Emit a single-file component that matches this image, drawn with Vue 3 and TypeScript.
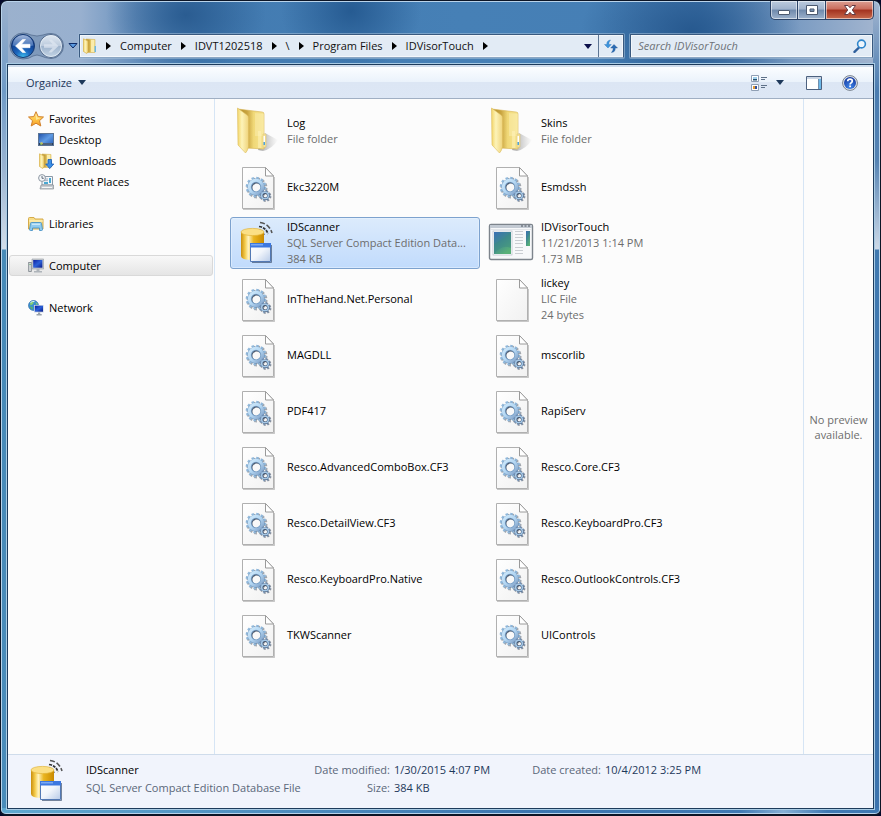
<script setup lang="ts">
import { ref } from 'vue'

interface FileItem {
  name: string
  icon: 'folder' | 'gear' | 'database' | 'app' | 'blank'
  meta: string[]
}
interface Place {
  name: string
  icon: string
  child?: boolean
}

const crumbs: string[] = ['Computer', 'IDVT1202518', '\\', 'Program Files', 'IDVisorTouch']

const groups: Place[][] = [
  [
    { name: 'Favorites', icon: 'star' },
    { name: 'Desktop', icon: 'desktop', child: true },
    { name: 'Downloads', icon: 'downloads', child: true },
    { name: 'Recent Places', icon: 'recent', child: true },
  ],
  [{ name: 'Libraries', icon: 'libraries' }],
  [{ name: 'Computer', icon: 'computer' }],
  [{ name: 'Network', icon: 'network' }],
]

const dll = (name: string): FileItem => ({ name, icon: 'gear', meta: [] })

const files: FileItem[] = [
  { name: 'Log', icon: 'folder', meta: ['File folder'] },
  { name: 'Skins', icon: 'folder', meta: ['File folder'] },
  dll('Ekc3220M'),
  dll('Esmdssh'),
  { name: 'IDScanner', icon: 'database', meta: ['SQL Server Compact Edition Data...', '384 KB'] },
  { name: 'IDVisorTouch', icon: 'app', meta: ['11/21/2013 1:14 PM', '1.73 MB'] },
  dll('InTheHand.Net.Personal'),
  { name: 'lickey', icon: 'blank', meta: ['LIC File', '24 bytes'] },
  dll('MAGDLL'),
  dll('mscorlib'),
  dll('PDF417'),
  dll('RapiServ'),
  dll('Resco.AdvancedComboBox.CF3'),
  dll('Resco.Core.CF3'),
  dll('Resco.DetailView.CF3'),
  dll('Resco.KeyboardPro.CF3'),
  dll('Resco.KeyboardPro.Native'),
  dll('Resco.OutlookControls.CF3'),
  dll('TKWScanner'),
  dll('UIControls'),
]

const selected = ref('IDScanner')
const place = ref('Computer')
const query = ref('')
</script>

<template>
  <svg class="sprite" width="0" height="0" aria-hidden="true">
    <defs>
      <linearGradient id="gFolderFront" x1="0" y1="0" x2="1" y2="0">
        <stop offset="0" stop-color="#f3d568" /><stop offset=".4" stop-color="#fdf3b8" /><stop offset="1" stop-color="#efd47c" />
      </linearGradient>
      <linearGradient id="gFolderBack" x1="0" y1="0" x2="1" y2="0">
        <stop offset="0" stop-color="#b08d2c" /><stop offset=".35" stop-color="#c9a440" /><stop offset=".6" stop-color="#f0d877" /><stop offset="1" stop-color="#f7e694" />
      </linearGradient>
      <linearGradient id="gShadow" x1="0" y1="0" x2="1" y2="0">
        <stop offset="0" stop-color="#666" stop-opacity=".6" /><stop offset="1" stop-color="#888" stop-opacity="0" />
      </linearGradient>
      <linearGradient id="gPage" x1="0" y1="0" x2="1" y2="1">
        <stop offset="0" stop-color="#fff" /><stop offset="1" stop-color="#f1f1f1" />
      </linearGradient>
      <linearGradient id="gGear" x1="0" y1="0" x2="1" y2="1">
        <stop offset="0" stop-color="#cfe9fb" /><stop offset=".5" stop-color="#b3d6f2" /><stop offset="1" stop-color="#7f9fc6" />
      </linearGradient>
      <linearGradient id="gCyl" x1="0" y1="0" x2="1" y2="0">
        <stop offset="0" stop-color="#c98e0c" /><stop offset=".18" stop-color="#f5cd4e" /><stop offset=".32" stop-color="#fff3bf" />
        <stop offset=".55" stop-color="#eab520" /><stop offset="1" stop-color="#c98a00" />
      </linearGradient>
      <linearGradient id="gWin" x1="0" y1="0" x2="1" y2="1">
        <stop offset="0" stop-color="#fff" /><stop offset=".5" stop-color="#f1f5fb" /><stop offset="1" stop-color="#b8cbe8" />
      </linearGradient>
      <linearGradient id="gShot" x1="0" y1="0" x2=".6" y2="1">
        <stop offset="0" stop-color="#3b6fb5" /><stop offset=".45" stop-color="#3f8694" /><stop offset="1" stop-color="#58b078" />
      </linearGradient>
      <linearGradient id="gScreen" x1="0" y1="0" x2="1" y2="1">
        <stop offset="0" stop-color="#0b1f9e" /><stop offset=".5" stop-color="#2a5fd8" /><stop offset="1" stop-color="#0a1c88" />
      </linearGradient>
      <linearGradient id="gStar" x1="0" y1="0" x2="0" y2="1">
        <stop offset="0" stop-color="#ffe9a0" /><stop offset=".5" stop-color="#ffc94a" /><stop offset="1" stop-color="#f59a28" />
      </linearGradient>
      <linearGradient id="gDesk" x1="0" y1="0" x2="1" y2="1">
        <stop offset="0" stop-color="#1f50a8" /><stop offset=".5" stop-color="#5f9be4" /><stop offset="1" stop-color="#2459b4" />
      </linearGradient>
      <radialGradient id="gBack" cx=".5" cy="1" r=".75">
        <stop offset="0" stop-color="#3fc0ee" /><stop offset=".45" stop-color="#1c66bd" /><stop offset="1" stop-color="#0e3b8c" />
      </radialGradient>
      <linearGradient id="gGloss" x1="0" y1="0" x2="0" y2="1">
        <stop offset="0" stop-color="#dfeafa" stop-opacity=".95" /><stop offset="1" stop-color="#6f9bd4" stop-opacity=".7" />
      </linearGradient>
      <linearGradient id="gFwd" x1="0" y1="0" x2="0" y2="1">
        <stop offset="0" stop-color="#e3eaf3" /><stop offset=".48" stop-color="#bccbdd" /><stop offset=".52" stop-color="#9fb4cd" /><stop offset="1" stop-color="#c4d5e6" />
      </linearGradient>
      <radialGradient id="gHelp" cx=".5" cy=".8" r=".8">
        <stop offset="0" stop-color="#3f86ea" /><stop offset="1" stop-color="#15379c" />
      </radialGradient>
    </defs>

    <symbol id="i-folder" viewBox="0 0 48 48">
      <path d="M24 43 L31 26 L44 33 Q38 42 29 44 Z" fill="url(#gShadow)" />
      <path d="M4 2 L28 5 Q30 5 30 7 L30 42 L12 41 Z" fill="url(#gFolderBack)" stroke="#d6b450" stroke-width=".6" />
      <path d="M21 6 L30 7 L30 29 L21 29 Z" fill="#fbeeb0" opacity=".5" />
      <path d="M24 24 H27 V41 H24 Z" fill="#fff3bd" opacity=".5" />
      <path d="M29 27 h3 v13 l-3 1 Z" fill="#f4e19a" stroke="#dcc06a" stroke-width=".5" />
      <path d="M29.500 29 h1.500 v6 h-1.500 Z" fill="#fff" />
      <path d="M29.500 35 h1.500 v3 h-1.500 Z" fill="#4aa3df" />
      <path d="M3.500 1 L13 8 Q14.500 9 14.500 11 L14.500 40 Q13.500 44 11.500 46 L4 38 Z" fill="url(#gFolderFront)" stroke="#dcbc5c" stroke-width=".6" />
    </symbol>

    <symbol id="i-page" viewBox="0 0 48 48">
      <path d="M8.500 4.500 H31.500 L39.500 13 V45.500 H8.500 Z" fill="url(#gPage)" stroke="#b0b0b0" />
      <path d="M9 46.500 H40.500 V14" fill="none" stroke="#888" stroke-opacity=".45" />
      <path d="M31.500 4.500 V13 H39.500 Z" fill="#fff" stroke="#9a9a9a" />
    </symbol>

    <symbol id="i-blank" viewBox="0 0 48 48"><use href="#i-page" /></symbol>

    <symbol id="i-gear" viewBox="0 0 48 48">
      <use href="#i-page" />
      <g fill="none">
        <circle cx="23" cy="25" r="8.500" stroke="#4b5563" stroke-opacity=".5" stroke-width="4" stroke-dasharray="2.450 2" />
        <circle cx="22" cy="24" r="9" stroke="#8fb7da" stroke-width="2.600" stroke-dasharray="2.400 2.310" />
        <circle cx="22.600" cy="24.800" r="6" stroke="#4b5b70" stroke-width="3.600" />
        <circle cx="22" cy="24" r="6.500" stroke="#7aa2ca" stroke-width="4.200" />
        <circle cx="22" cy="24" r="6.700" stroke="url(#gGear)" stroke-width="3" />
        <circle cx="31.800" cy="33.300" r="4.600" stroke="#5b6677" stroke-opacity=".7" stroke-width="2" stroke-dasharray="1.800 1.800" />
        <circle cx="31" cy="32.500" r="4.500" stroke="#6f8fb5" stroke-width="2" stroke-dasharray="1.700 1.830" />
        <circle cx="31.300" cy="32.800" r="3" stroke="#42526a" stroke-width="2.400" />
        <circle cx="31" cy="32.500" r="3.300" stroke="#a4c8e8" stroke-width="1.600" />
      </g>
    </symbol>

    <symbol id="i-database" viewBox="0 0 48 48">
      <g fill="none" stroke="#333">
        <path d="M25 11 q4 1 5 5" stroke-width="1.400" />
        <path d="M25 7.500 q7 1 9 7.500" stroke-width="1.700" stroke-dasharray="3 1" />
        <path d="M26 3.500 q9 1 12 10.500" stroke-width="1.600" stroke-dasharray="5 2" stroke="#555" />
      </g>
      <path d="M7 13 V37 Q7 41 18.500 41 Q30 41 30 37 V13 Z" fill="url(#gCyl)" />
      <ellipse cx="18.500" cy="13" rx="11.500" ry="3.600" fill="#fbdf85" stroke="#e3b43a" stroke-width=".7" />
      <path d="M16.500 24.500 H36.500 V42.500 H16.500 Z" fill="url(#gWin)" stroke="#5379b4" />
      <path d="M16 24 H37 V28.500 H16 Z" fill="#3d78e0" />
      <path d="M17 25 H29 V26.500 H17 Z" fill="#7ba9f2" />
      <path d="M37.500 26 V43.500 H18" fill="none" stroke="#3e5272" stroke-opacity=".7" />
    </symbol>

    <symbol id="i-app" viewBox="0 0 48 48">
      <rect x="1.500" y="5.500" width="43" height="35" rx="1.500" fill="#f7f8fa" stroke="#7d848c" stroke-width="1.400" />
      <path d="M2 6 H44 V9 H2 Z" fill="#c3cad3" />
      <path d="M33 7 h2 m1.500 0 h2 m1.500 0 h2" stroke="#4a525c" stroke-width="1.200" />
      <path d="M3 10 H43 V11 H3 Z" fill="#e3e6ea" />
      <rect x="5" y="12" width="19" height="24" fill="#fff" stroke="#b6bec8" stroke-width=".7" />
      <rect x="6" y="13" width="17" height="22" fill="url(#gShot)" />
      <path d="M6 25 Q15 21 23 13 V29 Q14 25 6 35 Z" fill="#3c8a83" opacity=".5" />
      <path d="M27 12.500 h8 m-8 3 h8 m-8 3 h8 m-8 3 h8 m-8 3 h8 m-8 4 h8 m-8 3 h8 m-8 3 h8" stroke="#c9cdd2" />
      <rect x="38" y="12" width="4" height="15" fill="url(#gShot)" />
    </symbol>

    <symbol id="i-star" viewBox="0 0 16 16">
      <path d="M8 .7 L10.200 5.600 L15.500 6 L11.500 9.700 L12.800 15 L8 12.200 L3.200 15 L4.500 9.700 L.5 6 L5.800 5.600 Z" fill="url(#gStar)" stroke="#d1812c" stroke-width="1" stroke-linejoin="round" />
      <path d="M8 3 L9.200 6.500 L12.500 7 L8 9 Z" fill="#fff2b5" opacity=".7" />
    </symbol>

    <symbol id="i-desktop" viewBox="0 0 16 16">
      <rect x=".5" y="1.500" width="15" height="12" fill="url(#gDesk)" stroke="#5b7494" />
      <path d="M1 11 H15 V13 H1 Z" fill="#2b3f5c" />
      <path d="M5 12 h9" stroke="#8497b3" stroke-width=".8" />
      <circle cx="3.500" cy="11.500" r="1.300" fill="#e8c95a" /><circle cx="3" cy="12" r=".8" fill="#57c36e" />
    </symbol>

    <symbol id="i-minifolder" viewBox="0 0 16 16">
      <path d="M4 1 L13 1.500 V14.500 H5 Z" fill="url(#gFolderBack)" stroke="#d9b75a" stroke-width=".6" />
      <path d="M9 2 h3 v12 h-3 Z" fill="#fdf2bd" opacity=".7" />
      <path d="M1.500 .8 L6 3 V13.500 L4.800 15.500 L1.500 13.500 Z" fill="url(#gFolderFront)" stroke="#d8b24c" stroke-width=".7" />
      <path d="M12.500 8 h1.500 v6 h-1.500 Z" fill="#6cb7e4" />
    </symbol>

    <symbol id="i-downloads" viewBox="0 0 16 16">
      <use href="#i-minifolder" />
      <path d="M10 6.500 h3.500 v4.500 h2.300 L11.700 15.600 L7.700 11 H10 Z" fill="#3a8ee6" stroke="#1d5cb0" stroke-width=".8" />
    </symbol>

    <symbol id="i-recent" viewBox="0 0 16 16">
      <path d="M4 2.500 H14.500 V11 H4 Z" fill="#f5f8fb" stroke="#8b98a6" />
      <path d="M6 8 h4 v2 h-4 Z m5 -4 h2 v5 h-2 Z" fill="#4aa8d2" />
      <path d="M6 5 h4 M6 6.700 h4" stroke="#8c9bb0" stroke-width=".8" />
      <path d="M3 11 H15.500 V15 H2 Z" fill="#c7ccd2" stroke="#8b9097" stroke-width=".7" />
      <path d="M4 13.500 h10" stroke="#f7f7f7" />
      <circle cx="4" cy="4" r="3.400" fill="#f6f8fa" stroke="#8d97a3" stroke-width="1" />
      <path d="M4 2 V4.300 H5.800" fill="none" stroke="#3c4c60" stroke-width=".8" />
    </symbol>

    <symbol id="i-libraries" viewBox="0 0 16 16">
      <path d="M.5 2.500 Q.5 1.500 1.500 1.500 H6 L7 3 H15 V13 H.5 Z" fill="#f8dd87" stroke="#d5ab4a" />
      <path d="M1 5 H15" stroke="#fff4c4" />
      <path d="M2.500 7.500 Q2.500 6.500 3.500 6.500 H12.500 Q13.500 6.500 13.500 7.500 L14.500 13.500 Q14.500 14.500 13.500 14.500 H11.500 V12 H4.500 V14.500 H2.500 Q1.500 14.500 1.500 13.500 Z" fill="#90cbee" stroke="#4a93c6" stroke-width=".9" />
      <path d="M4 8.200 H12" stroke="#e3f4fd" />
    </symbol>

    <symbol id="i-computer" viewBox="0 0 16 16">
      <rect x=".7" y="4.500" width="2.600" height="9" fill="#d5d9dc" stroke="#7b8288" stroke-width=".8" />
      <path d="M1.500 6.500 h1.200" stroke="#53b35a" stroke-width="1" />
      <path d="M4 1 H15.600 V11 H4 Z" fill="#c9ced4" stroke="#92999f" stroke-width=".6" />
      <path d="M5.200 2 H14.400 V9.700 H5.200 Z" fill="url(#gScreen)" />
      <path d="M8.500 11 h3 v2 h2.500 v1.500 h-8 V13 h2.500 Z" fill="#aeb4ba" />
    </symbol>

    <symbol id="i-network" viewBox="0 0 16 16">
      <circle cx="5.500" cy="5.500" r="5" fill="#3a8fd0" stroke="#2464a4" stroke-width=".6" />
      <path d="M2 3 Q4 .7 6 1.200 L5 4 L2.500 5.500 Z M7.500 2 L10 4 L8.500 5 Z" fill="#86d070" />
      <path d="M1.500 6.500 L4.500 7 L4.500 10 Z" fill="#5eb85c" />
      <path d="M2.500 2.500 q2 -1.500 4 -1" stroke="#d5efff" fill="none" />
      <path d="M6 5 H15.700 V12.500 H6 Z" fill="#d2dbe6" />
      <path d="M6.800 5.700 H15 V11.700 H6.800 Z" fill="url(#gScreen)" />
      <path d="M10 12.500 h2.200 v1.500 h1.500 v1.400 h-5.200 V14 h1.500 Z" fill="#9aa3ac" />
    </symbol>
  </svg>

  <div class="window">
    <header class="titlebar">
      <div class="caption">
        <button class="cap" aria-label="Minimize">
          <svg width="14" height="12"><rect x="1.500" y="6.500" width="11" height="4" rx=".5" fill="#fff" stroke="#4d5a70" /></svg>
        </button>
        <button class="cap" aria-label="Maximize">
          <svg width="14" height="12"><path d="M1.500 1.500 H12.500 V10.500 H1.500 Z M5 5 V7.500 H9 V5 Z" fill="#fff" fill-rule="evenodd" stroke="#4d5a70" /></svg>
        </button>
        <button class="cap close" aria-label="Close">
          <svg width="14" height="12"><path d="M1.500 1.500 H5 L7 3.700 L9 1.500 H12.500 L9.300 6 L12.500 10.500 H9 L7 8.300 L5 10.500 H1.500 L4.700 6 Z" fill="#fff" stroke="#633a43" /></svg>
        </button>
      </div>

      <div class="navrow">
        <div class="history">
          <svg class="pod" viewBox="0 0 56 28" aria-hidden="true">
            <path d="M14 1 Q18 1 22 3 Q28 5 34 3 Q38 1.500 42 1.500 A12.500 12.500 0 0 1 42 26.500 Q36 26 32 24 Q28 22 24 24 Q20 27 14 27 A13 13 0 0 1 14 1 Z" fill="#5f7ea4" fill-opacity=".45" stroke="#4d6588" stroke-opacity=".7" />
          </svg>
          <button class="round" aria-label="Back">
            <svg viewBox="0 0 26 26" width="26" height="26">
              <circle cx="13" cy="13" r="11.500" fill="url(#gBack)" stroke="#173a72" />
              <path d="M2.500 12.500 A10.500 10.500 0 0 1 23.500 12.500 Q13 15 2.500 12.500 Z" fill="url(#gGloss)" opacity=".75" />
              <path d="M5.500 13 L12.500 6.500 H15.500 L11.500 11.300 H20 V14.700 H11.500 L15.500 19.500 H12.500 Z" fill="#fff" stroke="#fff" stroke-width=".6" />
            </svg>
          </button>
          <button class="round" aria-label="Forward">
            <svg viewBox="0 0 26 26" width="26" height="26">
              <circle cx="13" cy="13" r="11.500" fill="url(#gFwd)" stroke="#52698b" />
              <circle cx="13" cy="13" r="10.500" fill="none" stroke="#e4edf6" stroke-opacity=".8" />
              <path d="M20.500 13 L13.500 6.500 H10.500 L14.500 11.300 H6 V14.700 H14.500 L10.500 19.500 H13.500 Z" fill="#dde6f0" fill-opacity=".75" />
            </svg>
          </button>
          <button class="recent" aria-label="Recent pages">
            <svg width="10" height="8"><path d="M1 1.500 H9 L5 6 Z" fill="#5b9be0" stroke="#0d2a66" /></svg>
          </button>
        </div>

        <nav class="address" aria-label="Address">
          <svg class="i16"><use href="#i-minifolder" /></svg>
          <template v-for="c in crumbs" :key="c">
            <svg class="sep" width="5" height="8"><path d="M0 0 L5 4 L0 8 Z" fill="#000" /></svg>
            <a href="#" @click.prevent>{{ c }}</a>
          </template>
          <svg class="sep" width="5" height="8"><path d="M0 0 L5 4 L0 8 Z" fill="#000" /></svg>
          <button class="drop" aria-label="Previous locations">
            <svg width="8" height="5"><path d="M0 0 H8 L4 5 Z" fill="#0a0f4a" /></svg>
          </button>
          <button class="refresh" aria-label="Refresh">
            <svg width="14" height="14" viewBox="0 0 14 14">
              <path d="M6.500 1 Q2.500 1.500 2.800 5.500 H.5 L4 9 L7.300 5.500 H4.800 Q4.500 3 6.500 1 Z" fill="#3c94dc" stroke="#2a72b8" stroke-width=".4" />
              <path d="M7.500 13.500 Q11.500 13 11.200 9 H13.500 L10 5.500 L6.700 9 H9.200 Q9.500 11.500 7.500 13.500 Z" fill="#2a6cb4" stroke="#1d5494" stroke-width=".4" />
            </svg>
          </button>
        </nav>

        <form class="search" @submit.prevent>
          <input v-model="query" type="text" aria-label="Search IDVisorTouch" placeholder="Search IDVisorTouch" />
          <button aria-label="Search">
            <svg width="14" height="14" viewBox="0 0 14 14">
              <path d="M6 8.500 L1.500 12.800" stroke="#2f5f9c" stroke-width="2.400" stroke-linecap="round" />
              <circle cx="8.500" cy="5" r="3.900" fill="#eef6fd" stroke="#2f86cc" stroke-width="1.600" />
            </svg>
          </button>
        </form>
      </div>
    </header>

    <main class="client">
      <div class="toolbar">
        <button class="organize">
          Organize
          <svg width="8" height="5"><path d="M0 0 H8 L4 5 Z" fill="#1e395b" /></svg>
        </button>
        <div class="tools">
          <button aria-label="Change your view">
            <svg width="16" height="16">
              <path d="M.5 .5 h7 v6 h-7 Z M.5 9.500 h7 v6 h-7 Z" fill="#fff" stroke="#8f9fb4" />
              <path d="M2 4 h4 v1.500 h-4 Z" fill="#27506e" /><path d="M2 2 h4 v2 h-4 Z" fill="#9fd0ec" />
              <path d="M2 11 h2 v3 h-2 Z" fill="#e39a34" /><path d="M4 11 h2 v3 h-2 Z" fill="#34519c" />
              <path d="M10 2.500 h6 M10 4.500 h4 M10 10.500 h6 M10 12.500 h4" stroke="#5e7188" />
            </svg>
          </button>
          <button class="more" aria-label="More options">
            <svg width="8" height="5"><path d="M0 0 H8 L4 5 Z" fill="#1e395b" /></svg>
          </button>
          <button class="panebtn" aria-label="Hide the preview pane">
            <svg width="16" height="14">
              <path d="M.5 .5 H15.500 V13.500 H.5 Z" fill="#fff" stroke="#4c617f" />
              <path d="M1 1 H15 V3 H1 Z" fill="#cad5e4" /><path d="M13 3 H15 V13 H13 Z" fill="#6cb8e8" /><path d="M12.500 3 V13" stroke="#7290ae" />
            </svg>
          </button>
          <button aria-label="Get help">
            <svg width="16" height="16" viewBox="0 0 16 16">
              <circle cx="8" cy="8" r="7.400" fill="#e3e7ec" stroke="#76808e" stroke-width="1" />
              <circle cx="8" cy="8" r="6" fill="url(#gHelp)" />
              <path d="M5.700 6.300 Q5.700 4.200 8 4.200 Q10.300 4.200 10.300 6.100 Q10.300 7.200 9 7.900 Q8.100 8.400 8.100 9.500" fill="none" stroke="#fff" stroke-width="1.700" />
              <rect x="7.200" y="10.500" width="1.800" height="1.700" fill="#fff" />
            </svg>
          </button>
        </div>
      </div>

      <div class="body">
        <nav class="places" aria-label="Places">
          <ul v-for="(g, i) in groups" :key="i">
            <li v-for="p in g" :key="p.name">
              <button :class="{ child: p.child, current: p.name === place }" @click="place = p.name">
                <svg class="i16"><use :href="'#i-' + p.icon" /></svg>
                {{ p.name }}
              </button>
            </li>
          </ul>
        </nav>

        <section class="files" aria-label="Files">
          <button
            v-for="f in files"
            :key="f.name"
            class="file"
            :class="{ selected: f.name === selected }"
            @click="selected = f.name"
          >
            <svg class="i48"><use :href="'#i-' + f.icon" /></svg>
            <span class="lines">
              <span class="name">{{ f.name }}</span>
              <span v-for="m in f.meta" :key="m" class="meta">{{ m }}</span>
            </span>
          </button>
        </section>

        <aside class="preview">No preview available.</aside>
      </div>

      <footer class="details">
        <svg class="i48"><use href="#i-database" /></svg>
        <div class="what">
          <p class="title">IDScanner</p>
          <p class="kind">SQL Server Compact Edition Database File</p>
        </div>
        <dl class="modified">
          <dt>Date modified:</dt><dd>1/30/2015 4:07 PM</dd>
          <dt>Size:</dt><dd>384 KB</dd>
        </dl>
        <dl class="created">
          <dt>Date created:</dt><dd>10/4/2012 3:25 PM</dd>
        </dl>
      </footer>
    </main>
  </div>
</template>

<style>
body {
  background: #04092b;
}
</style>

<style scoped>
* {
  box-sizing: border-box;
}
.sprite {
  position: absolute;
}
svg {
  display: block;
  flex: none;
}
button {
  margin: 0;
  padding: 0;
  border: 0;
  background: none;
  font: inherit;
  color: inherit;
  text-align: left;
}
.window {
  display: flex;
  flex-direction: column;
  min-height: 100vh;
  padding: 0 6px 5px;
  border: 1px solid #0c1526;
  border-bottom-width: 2px;
  border-radius: 7px 7px 6px 6px;
  box-shadow: inset 0 0 0 1px #b9d3ea;
  font: 11px/16px 'Open Sans', 'Segoe UI', sans-serif;
  color: #000;
  background:
    linear-gradient(90deg, #5fa9d0 0, #4f8fc0 30%, #3c76b0 60%, #3f79b3 84%, #86b0d6 89%, #3f79b3 94%) 0 100% / 100% 6px no-repeat,
    linear-gradient(#9bb1cd 0, #6f9ac6 90px, #9cb5d2 170px, #d3deea 248px, #478ab8 249px, #4a8cba 100%) 0 0 / 7px 100% no-repeat,
    linear-gradient(#a4b6d0 0, #4a7cb0 90px, #5583b3 160px, #cdd9e7 248px, #4079b0 249px, #3c73ad 100%) 100% 0 / 7px 100% no-repeat,
    radial-gradient(ellipse 80px 60px at 185px 14px, #2a5c91 0, #2a5c9100 100%),
    radial-gradient(ellipse 70px 60px at 350px 10px, #265b92 0, #265b9200 100%),
    radial-gradient(ellipse 110px 70px at 690px 30px, #27598f 0, #27598f00 100%),
    linear-gradient(90deg, #9bb1cd 0, #98b0cf 80px, #6790bd 135px, #437bb1 200px, #4680b6 460px, #467fb5 600px, #4276ac 700px, #7d9dc3 800px, #a4b6d0 100%);
}
.titlebar {
  padding-bottom: 5px;
}
.caption {
  display: flex;
  justify-content: flex-end;
}
.cap {
  display: flex;
  align-items: center;
  justify-content: center;
  width: 28px;
  height: 19px;
  border: 1px solid #2c4468;
  border-top: 0;
  border-left-width: 0;
  box-shadow: inset 0 0 0 1px #ffffff88;
  background: linear-gradient(#bccbde 0, #9fb2cc 45%, #6f89ac 50%, #9db2cc 100%);
}
.cap:first-child {
  border-left-width: 1px;
  border-radius: 0 0 0 5px;
}
.cap.close {
  width: 48px;
  border-radius: 0 0 5px 0;
  background: linear-gradient(#dc9f93 0, #c96c5c 45%, #a3321f 50%, #c76a4d 100%);
}
.navrow {
  display: flex;
  align-items: center;
  gap: 6px;
  padding: 13px 0 0 3px;
}
.history {
  display: flex;
  align-items: center;
  gap: 2px;
  position: relative;
  width: 63px;
}
.pod {
  position: absolute;
  left: -1px;
  top: -1px;
  width: 56px;
  height: 28px;
}
.round {
  position: relative;
}
.recent {
  margin-left: 2px;
}
.address,
.search {
  display: flex;
  align-items: center;
  height: 24px;
  border: 1px solid #39597f;
  border-bottom-color: #8ba6c3;
  border-radius: 1px;
  box-shadow: 0 0 0 1px #a9c3dc88, inset 0 0 0 1px #f3f7fb;
  background: #e2ebf5;
}
.address {
  flex: 1 1 546px;
  padding-left: 2px;
}
.address a {
  color: #111;
  text-decoration: none;
  white-space: nowrap;
}
.address .sep {
  margin: 0 9px;
}
.address .i16 + .sep {
  margin-left: 8px;
}
.drop {
  display: flex;
  justify-content: center;
  width: 20px;
  margin-left: auto;
}
.refresh {
  display: flex;
  align-items: center;
  justify-content: center;
  width: 25px;
  height: 22px;
  border-left: 1px solid #5d7593;
}
.search {
  flex: 0 1 243px;
  padding: 0 5px 0 7px;
  margin-right: 1px;
}
.search input {
  flex: 1;
  min-width: 0;
  padding: 0;
  border: 0;
  outline: 0;
  background: none;
  font: inherit;
}
.search input::placeholder {
  color: #6d7277;
  font-style: italic;
}
.client {
  display: flex;
  flex: 1;
  flex-direction: column;
  border: 1px solid #1d3b5c;
  box-shadow: 0 0 0 1px #a9cbe4;
  background: #fcfcfc;
}
.toolbar {
  display: flex;
  align-items: center;
  justify-content: space-between;
  height: 34px;
  padding: 0 15px 0 18px;
  border-top: 2px solid #cfdcec;
  border-bottom: 1px solid #a0afc3;
  background: linear-gradient(#fbfdff 0, #eaf2fb 50%, #dce6f4 50%, #dde7f5 100%);
  color: #1e395b;
}
.organize {
  display: flex;
  align-items: center;
  gap: 6px;
}
.tools {
  display: flex;
  align-items: center;
}
.more {
  margin: 0 22px 0 9px;
}
.panebtn {
  margin-right: 20px;
}
.body {
  display: flex;
  flex: 1;
}
.places {
  flex: 0 0 207px;
  padding: 9px 1px 0;
  border-right: 1px solid #d6e5f5;
}
.places ul {
  margin: 0 0 21px;
  padding: 0;
  list-style: none;
}
.places button {
  display: flex;
  align-items: center;
  gap: 5px;
  width: 100%;
  height: 21px;
  padding-left: 18px;
  border: 1px solid transparent;
  border-radius: 3px;
}
.places .child {
  padding-left: 28px;
}
.places .current {
  border-color: #d9d9d9;
  background: linear-gradient(#f8f8f8, #e5e5e5);
}
.i16 {
  width: 16px;
  height: 16px;
}
.i48 {
  width: 48px;
  height: 48px;
}
.files {
  display: grid;
  flex: 1;
  grid-template-columns: repeat(auto-fill, 250px);
  align-content: start;
  gap: 4px;
  padding: 6px 0 6px 15px;
}
.file {
  display: flex;
  align-items: center;
  gap: 5px;
  height: 52px;
  padding: 0 7px 0 3px;
  border: 1px solid transparent;
  border-radius: 3px;
}
.file.selected {
  border-color: #7da2ce;
  box-shadow: inset 0 0 0 1px #ebf4fd88;
  background: linear-gradient(#dcebfc, #c1dbfc);
}
.lines {
  display: flex;
  flex-direction: column;
  min-width: 0;
}
.name,
.meta {
  white-space: nowrap;
}
.meta {
  color: #6d6d6d;
}
.preview {
  display: flex;
  flex: 0 0 70px;
  align-items: center;
  justify-content: center;
  border-left: 1px solid #d6e5f5;
  line-height: 15px;
  text-align: center;
  color: #6d6d6d;
}
.details {
  display: flex;
  align-items: flex-start;
  height: 54px;
  padding: 1px 16px 0;
  border-top: 1px solid #cfdceb;
  background: #f1f4fc;
  line-height: 18px;
  color: #5a6779;
  white-space: nowrap;
}
.details .i48 {
  margin-top: 1px;
}
.what {
  width: 220px;
  margin: 5px 6px 0 14px;
}
.what p {
  margin: 0;
}
.what .title {
  color: #000;
}
.details dl {
  display: grid;
  column-gap: 4px;
  margin: 5px 4px 0 0;
}
.details .modified {
  grid-template-columns: 78px 134px;
}
.details .created {
  grid-template-columns: 69px auto;
}
.details dt {
  text-align: right;
}
.details dd {
  margin: 0;
  color: #1e395b;
}
</style>
